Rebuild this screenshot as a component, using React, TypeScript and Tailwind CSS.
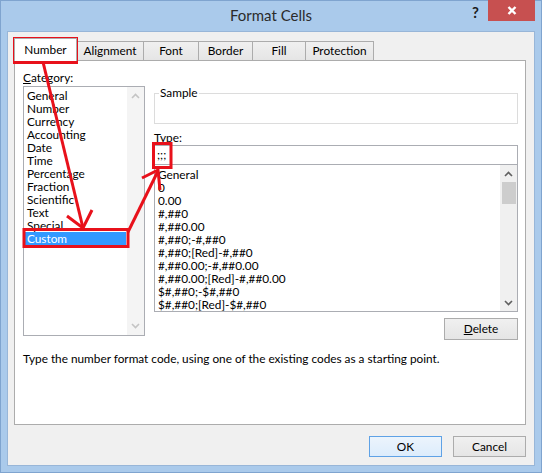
import React from "react";

const categories = [
  "General",
  "Number",
  "Currency",
  "Accounting",
  "Date",
  "Time",
  "Percentage",
  "Fraction",
  "Scientific",
  "Text",
  "Special",
  "Custom",
];

const types = [
  "General",
  "0",
  "0.00",
  "#,##0",
  "#,##0.00",
  "#,##0;-#,##0",
  "#,##0;[Red]-#,##0",
  "#,##0.00;-#,##0.00",
  "#,##0.00;[Red]-#,##0.00",
  "$#,##0;-$#,##0",
  "$#,##0;[Red]-$#,##0",
];

function ChevronUp({ color }: { color: string }) {
  return (
    <svg width="9" height="6" viewBox="0 0 9 6">
      <path d="M1 5 L4.5 1.5 L8 5" fill="none" stroke={color} strokeWidth="1.6" />
    </svg>
  );
}

function ChevronDown({ color }: { color: string }) {
  return (
    <svg width="9" height="6" viewBox="0 0 9 6">
      <path d="M1 1 L4.5 4.5 L8 1" fill="none" stroke={color} strokeWidth="1.6" />
    </svg>
  );
}

function Tab({ label, w }: { label: string; w: string }) {
  return (
    <div
      className={`${w} h-[19px] border-t border-r border-[#acacac] bg-[linear-gradient(#f0f0f0,#e5e5e5)] flex items-center justify-center leading-[14px]`}
    >
      {label}
    </div>
  );
}

export default function App() {
  return (
    <div className="relative w-[542px] h-[473px] bg-[#aacaeb] flex flex-col overflow-hidden font-['Lato','Noto_Sans',sans-serif] text-[11.8px] text-[#000] shadow-[inset_0_0_0_1px_#7fa4cf]">
      {/* title bar */}
      <div className="h-[31px] shrink-0 grid grid-cols-[1fr_auto_1fr]">
        <div />
        <div className="pt-[5px] text-[15px] leading-[20px] text-[#2b2b2b]">Format Cells</div>
        <div className="flex justify-end items-start pr-[7px]">
          <div className="mt-[3px] mr-[9px] text-[15px] font-bold leading-[18px] text-[#1c1c1c]">?</div>
          <div className="w-[47px] h-[21px] bg-[#c75050] flex items-center justify-center">
            <svg width="10" height="9" viewBox="0 0 10 9">
              <path d="M1.5 1 L8.5 8 M8.5 1 L1.5 8" stroke="#ffffff" strokeWidth="2.4" />
            </svg>
          </div>
        </div>
      </div>

      {/* client area */}
      <div className="mx-[7px] h-[435px] shrink-0 border border-[#98b6d8] bg-[#f0f0f0] flex flex-col">
        {/* tabs */}
        <div className="h-[22px] mt-[6px] ml-[6px] flex items-end">
          <div className="relative z-10 w-[63px] h-[23px] -mb-px border-t border-l border-r border-[#acacac] bg-white flex items-center justify-center leading-[14px]">
            Number
          </div>
          <Tab label="Alignment" w="w-[67px]" />
          <Tab label="Font" w="w-[55px]" />
          <Tab label="Border" w="w-[54px]" />
          <Tab label="Fill" w="w-[53px]" />
          <Tab label="Protection" w="w-[68px]" />
        </div>

        {/* tab page */}
        <div className="ml-[6px] w-[512px] h-[365px] border border-[#acacac] bg-white pl-[8px] pt-[9px] flex flex-col">
          <div className="h-[15px] leading-[15px]">
            <span className="underline">C</span>ategory:
          </div>
          <div className="mt-[1px] flex gap-[9px]">
            {/* category list */}
            <div className="w-[122px] h-[250px] border border-[#abadb3] flex">
              <div className="flex-1 pt-[2px] px-[1px]">
                {categories.map((c) => (
                  <div
                    key={c}
                    className={
                      c === "Custom"
                        ? "h-[13px] leading-[13px] pl-[2px] bg-[#3399ff] text-white"
                        : "h-[13px] leading-[13px] pl-[2px]"
                    }
                  >
                    {c}
                  </div>
                ))}
              </div>
              <div className="w-[17px] bg-[#f4f4f4] flex flex-col justify-between items-center py-[6px]">
                <ChevronUp color="#c4c4c4" />
                <ChevronDown color="#c4c4c4" />
              </div>
            </div>

            {/* right column */}
            <div className="w-[364px] flex flex-col">
              <fieldset className="h-[38px] border border-[#dcdcdc]">
                <legend className="ml-[4px] px-[1px] leading-[14px]">Sample</legend>
              </fieldset>
              <div className="mt-[6px] h-[15px] leading-[15px]">
                <span className="underline">T</span>ype:
              </div>
              <div className="h-[20px] border border-[#abadb3] pl-[2px] leading-[18px]">;;;</div>
              <div className="-mt-px h-[148px] border border-[#abadb3] flex">
                <div className="flex-1 pt-[3px] pl-[3px]">
                  {types.map((t) => (
                    <div key={t} className="h-[13px] leading-[13px] whitespace-nowrap">
                      {t}
                    </div>
                  ))}
                </div>
                <div className="w-[17px] bg-[#f0f0f0] flex flex-col items-center">
                  <div className="h-[17px] flex items-center justify-center">
                    <ChevronUp color="#606060" />
                  </div>
                  <div className="w-[14px] h-[22px] bg-[#cdcdcd] bg-[radial-gradient(#b4b4b4_0.6px,transparent_0.7px)] bg-[length:2px_2px]" />
                  <div className="flex-1" />
                  <div className="h-[17px] flex items-center justify-center">
                    <ChevronDown color="#606060" />
                  </div>
                </div>
              </div>
              <div className="mt-[6px] self-end w-[74px] h-[22px] border border-[#acacac] bg-[linear-gradient(#f0f0f0,#e5e5e5)] flex items-center justify-center leading-[14px]">
                <span>
                  <span className="underline">D</span>elete
                </span>
              </div>
            </div>
          </div>
          <div className="mt-[12px] leading-[14px]">
            Type the number format code, using one of the existing codes as a starting point.
          </div>
        </div>

        {/* footer buttons */}
        <div className="mt-[11px] pr-[8px] flex justify-end gap-[11px]">
          <div className="w-[73px] h-[21px] border border-[#5fa2e6] bg-[linear-gradient(#ecf4fc,#dcecfc)] flex items-center justify-center leading-[14px]">
            OK
          </div>
          <div className="w-[73px] h-[21px] border border-[#acacac] bg-[linear-gradient(#f0f0f0,#e5e5e5)] flex items-center justify-center leading-[14px]">
            Cancel
          </div>
        </div>
      </div>

      {/* red annotations overlay */}
      <svg
        className="absolute left-0 top-0 pointer-events-none"
        width="542"
        height="473"
        viewBox="0 0 542 473"
      >
        <g fill="none" stroke="#e8111b" strokeWidth="3" strokeLinecap="butt">
          <rect x="14.5" y="38.5" width="62" height="24" />
          <rect x="24" y="229.5" width="104" height="17" />
          <rect x="153.5" y="143.5" width="17.5" height="24" />
          <path d="M43 62 L83 228" />
          <path d="M67 216 L83 228 L92 210" />
          <path d="M128 232 L158 171" />
          <path d="M142 178 L158 170 L160 190" />
        </g>
      </svg>
    </div>
  );
}
